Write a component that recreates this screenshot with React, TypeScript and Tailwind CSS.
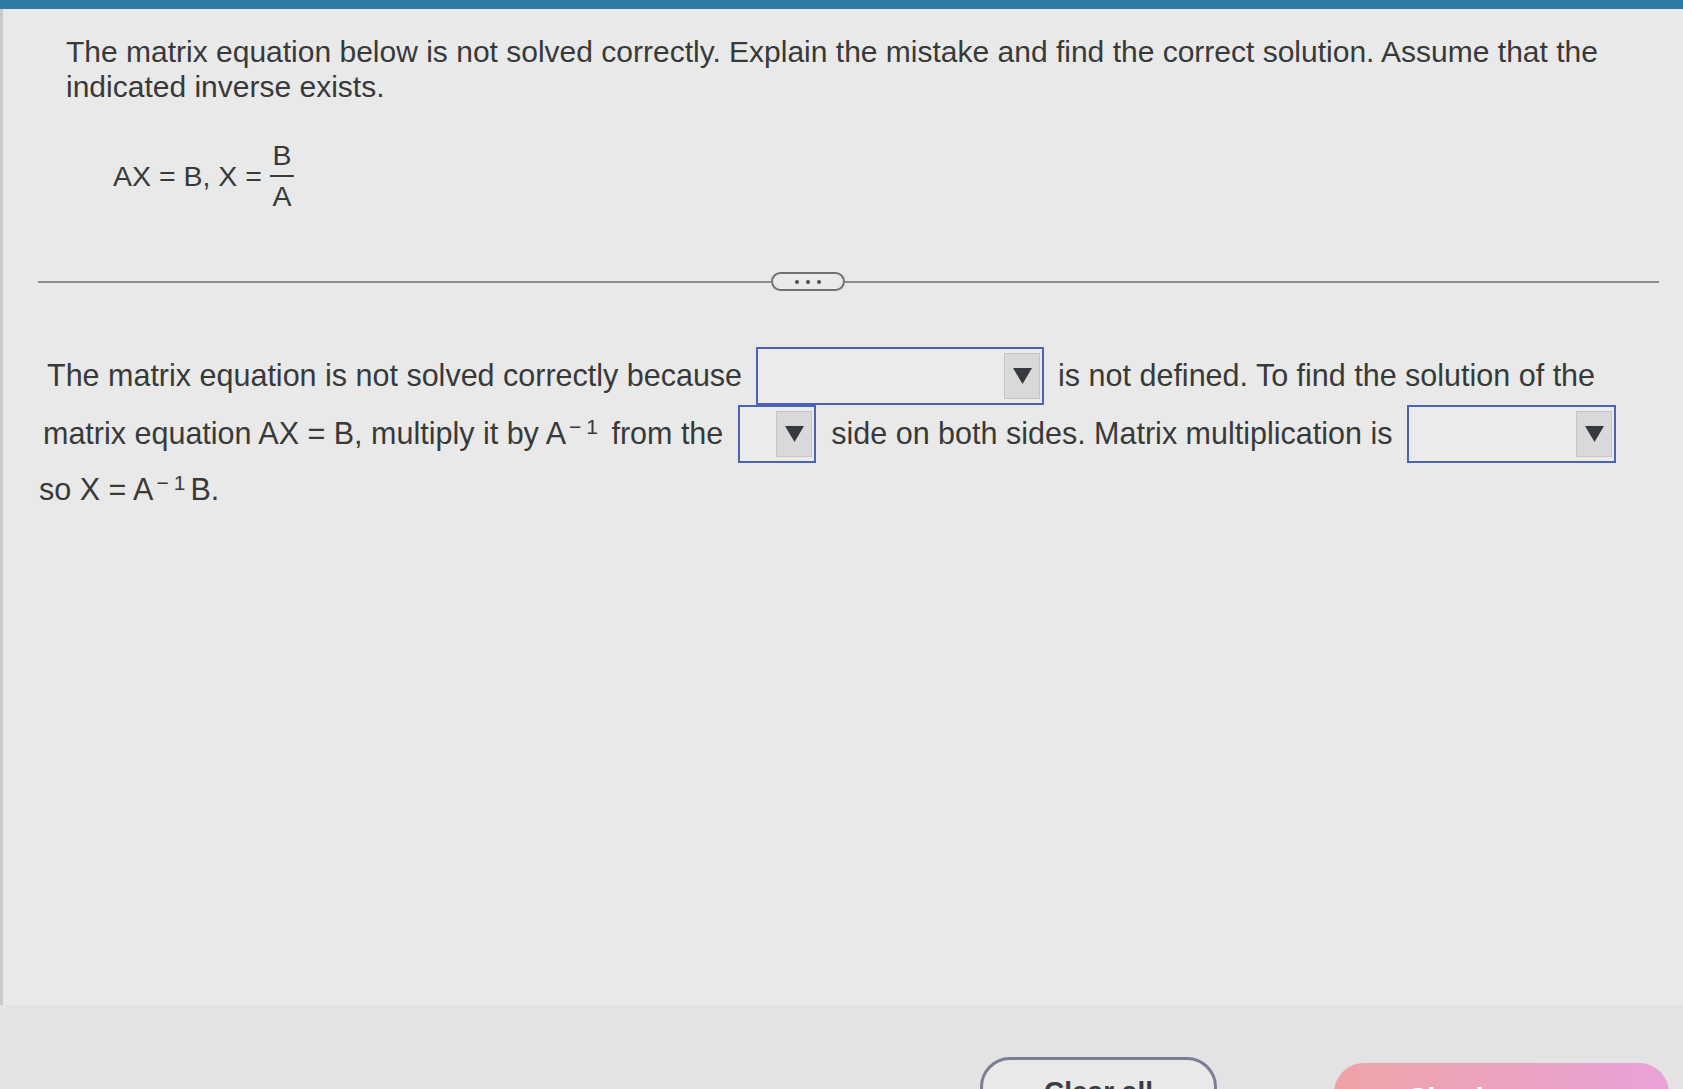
import React from 'react'

function Dropdown({ width }: { width: number }) {
  return (
    <div
      className="flex h-[58px] shrink-0 items-center justify-end border-2 border-[#4b63b3] bg-[#eaebea] pr-[2px]"
      style={{ width }}
    >
      <div className="flex h-[46px] w-[36px] items-center justify-center border border-[#c4c5c4] bg-[#d8d9d8]">
        <svg width="21" height="18" viewBox="0 0 21 18">
          <path d="M1 1 H20 L10.5 17 Z" fill="#363a3e" />
        </svg>
      </div>
    </div>
  )
}

function Inv() {
  return (
    <span className="relative">
      A
      <sup className="ml-[3px] text-[21px] tracking-[5px]">−1</sup>
    </span>
  )
}

export default function App() {
  return (
    <div
      className="relative h-[1089px] w-[1683px] overflow-hidden bg-[#e6e7e6] text-[#383a3a]"
      style={{ fontFamily: '"Liberation Sans", Arial, sans-serif' }}
    >
      <div className="h-[9px] bg-[#2c7ca6]" />
      <div className="flex h-[996px] flex-col border-l-[3px] border-[#c9cac9] bg-[#e8e9e8]">
        <p className="pl-[63px] pt-[25px] text-[30px] leading-[35px]">
          The matrix equation below is not solved correctly. Explain the mistake and find the correct solution. Assume that the
          <br />
          indicated inverse exists.
        </p>

        <div className="mt-[32px] flex items-center pl-[110px] text-[28.5px]">
          <span>AX = B, X =</span>
          <span className="ml-[8px] inline-flex flex-col items-center leading-[39px]">
            <span>B</span>
            <span className="h-[2px] w-[24px] bg-[#383a3a]" />
            <span>A</span>
          </span>
        </div>

        <div className="ml-[35px] mr-[24px] mt-[56px] flex items-center">
          <div className="h-[2px] w-[733px] bg-[#8c8e8e]" />
          <div className="flex h-[19px] w-[74px] items-center justify-center gap-[7px] rounded-full border-2 border-[#6f7272]">
            <span className="h-[4px] w-[4px] rounded-full bg-[#4a4d4d]" />
            <span className="h-[4px] w-[4px] rounded-full bg-[#4a4d4d]" />
            <span className="h-[4px] w-[4px] rounded-full bg-[#4a4d4d]" />
          </div>
          <div className="h-[2px] flex-1 bg-[#8c8e8e]" />
        </div>

        <div className="mt-[56px] flex flex-col text-[30.5px]">
          <div className="flex h-[58px] items-center gap-[14px] pl-[44px]">
            <span>The matrix equation is not solved correctly because</span>
            <Dropdown width={288} />
            <span>is not defined. To find the solution of the</span>
          </div>
          <div className="flex h-[58px] items-center gap-[15px] pl-[40px]">
            <span>
              matrix equation AX = B, multiply it by <Inv /> from the
            </span>
            <Dropdown width={78} />
            <span>side on both sides. Matrix multiplication is</span>
            <Dropdown width={209} />
          </div>
          <div className="flex h-[54px] items-center pl-[36px]">
            <span>
              so X = <Inv />B.
            </span>
          </div>
        </div>
      </div>

      <div className="relative h-[84px] bg-[#e2e3e2]">
        <button className="absolute left-[980px] top-[52px] h-[60px] w-[237px] rounded-[30px] border-[3px] border-[#7c7e96] bg-[#e8e9e8] pt-[10px] text-[28px] font-bold text-[#3a3c44]">
          Clear all
        </button>
        <button className="absolute left-[1334px] top-[58px] h-[60px] w-[335px] rounded-[30px] bg-gradient-to-r from-[#f0a3a6] to-[#e8a2d8] pt-[10px] text-[28px] font-bold text-white">
          Check answer
        </button>
      </div>
    </div>
  )
}
